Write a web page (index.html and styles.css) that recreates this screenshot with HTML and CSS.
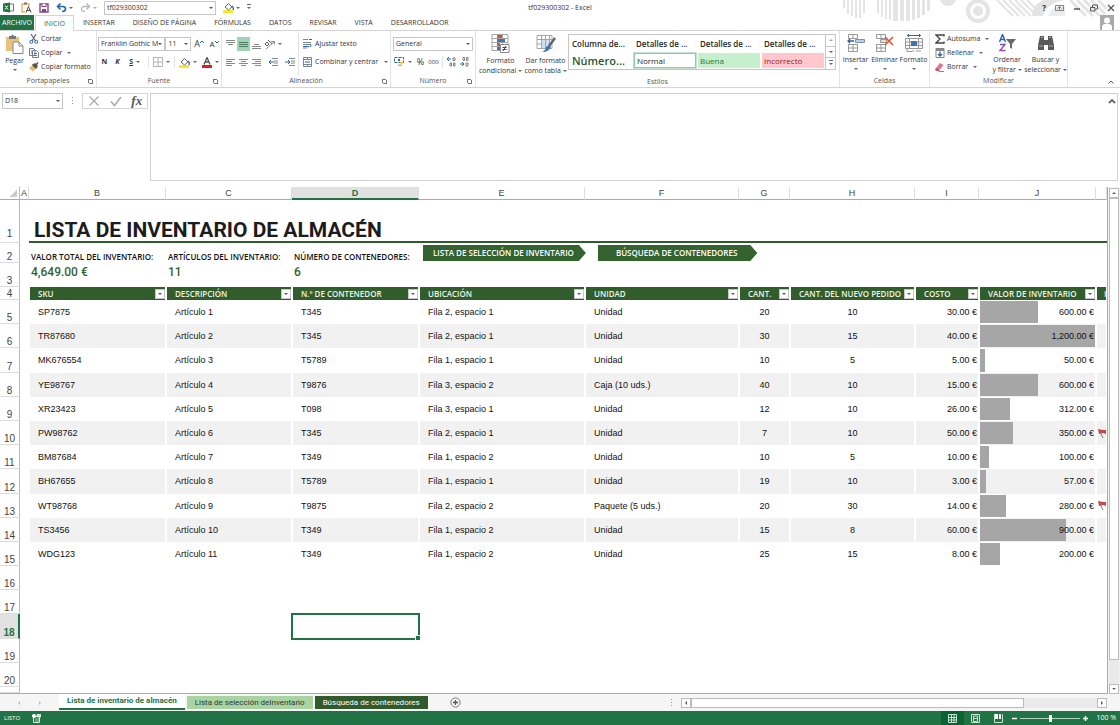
FILE: index.html
```
<!DOCTYPE html>
<html lang="es">
  <head>
    <meta charset="utf-8">
    <title>tf029300302 - Excel</title>
    <link rel="stylesheet" href="styles.css">
  </head>
  <body>
    <header class="titlebar">
      <svg class="pattern" width="280" height="24" viewBox="0 0 280 24">
        <path d="M4 0V8M8 0V14M12 0V16M16 0V18M20 0V18M24 0V13" stroke="#e4e4e4" stroke-width="2"/>
        <path d="M38 0V13M42 0V17M46 0V19M50 0V20" stroke="#e4e4e4" stroke-width="2"/>
        <path d="M53 0h5v21h-5zM60 0h4v21h-4zM66 0h4v21h-4zM72 0h3v20h-3zM77 0h3v18h-3zM82 0h3v15h-3zM87 0h3v11h-3z" fill="#e4e4e4"/>
        <circle cx="108" cy="-2" r="8" fill="#e4e4e4"/>
        <circle cx="138" cy="11" r="10" fill="none" stroke="#e4e4e4" stroke-width="4"/>
        <circle cx="138" cy="11" r="5" fill="#e4e4e4"/>
        <path d="M157 0l16 16M163 0l16 16M169 0l16 16M175 0l16 16M181 0l16 16M187 0l13 13" stroke="#e4e4e4" stroke-width="2"/>
        <path d="M192 16c0-8 5-13 11-16h22c-12 2-20 8-22 16z" fill="#e4e4e4"/>
        <path d="M208 16c2-6 7-11 17-11v11z" fill="#ededed"/>
        <path d="M230 0l16 16M237 0l16 16M244 0l16 16M251 0l14 14M258 0l9 9" stroke="#e4e4e4" stroke-width="3"/>
      </svg>
      <div class="quick">
        <svg width="11" height="11" viewBox="0 0 11 11"><path d="M6 2h4.500v7H6z" fill="#fff" stroke="#217346" stroke-width=".8"/><path d="M0 1.500L7 .5v10l-7-1z" fill="#217346"/><path d="M2 3.500l3 4M5 3.500l-3 4" stroke="#fff"/></svg>
        <button class="tool" aria-label="Pegar formato"><svg width="11" height="11" viewBox="0 0 11 11"><path d="M1 2h7v8H1z" fill="#fff" stroke="#e8b566" stroke-width="1.500"/><path d="M3 .5h3v2H3z" fill="#777"/><path d="M4 4h7v7H4z" fill="#fff"/><path d="M5 10.500l2.500-6 2.500 6M6 8.500h3" fill="none" stroke="#444"/></svg></button>
        <button class="tool" aria-label="Guardar"><svg width="10" height="10" viewBox="0 0 10 10"><path d="M1 1h8v8H1z" fill="#fff" stroke="#81438f" stroke-width="1.400"/><path d="M2.500 1h5v3h-5zM3 6h4v3H3z" fill="#81438f"/><path d="M3.500 1h3v2h-3z" fill="#fff"/></svg></button>
        <button class="tool wide" aria-label="Deshacer"><svg width="11" height="10" viewBox="0 0 11 10"><path d="M1.500 3.500h5q3 0 3 2.500T6 8.500M4.500.5l-3 3 3 3" fill="none" stroke="#2b63a8" stroke-width="1.600"/></svg><i class="caret"></i></button>
        <button class="tool wide" aria-label="Rehacer"><svg width="11" height="10" viewBox="0 0 11 10"><path d="M9.500 3.500h-5q-3 0-3 2.500T5 8.500M6.500.5l3 3-3 3" fill="none" stroke="#b8b8b8" stroke-width="1.300"/></svg><i class="caret pale"></i></button>
        <span class="combo file"><select aria-label="Documento"><option>tf029300302</option></select></span>
        <button class="tool wide" aria-label="Color de relleno"><svg width="11" height="11" viewBox="0 0 11 11"><path d="M0 8h10v3H0z" fill="#f5ea2e"/><path d="M2 5l3.500-3.500L9 5 5.500 8z" fill="#fff" stroke="#666"/><path d="M9 4q2 2 1 4" fill="none" stroke="#2b63a8" stroke-width="1.300"/></svg><i class="caret"></i></button>
        <button class="tool" aria-label="Personalizar"><i class="caret lined"></i></button>
      </div>
      <div class="window-title">tf029300302 - Excel</div>
      <div class="window-buttons">
        <button aria-label="Ayuda">?</button>
        <button aria-label="Opciones de la cinta"><svg width="9" height="8" viewBox="0 0 9 8"><path d="M.5 1.500h8v5h-8zM2.500 4.500l2-2 2 2M4.500 3v3" fill="none" stroke="#666" stroke-width=".8"/></svg></button>
        <button aria-label="Minimizar"><svg width="8" height="8"><path d="M1 5h6" stroke="#555" stroke-width="1.500"/></svg></button>
        <button aria-label="Restaurar"><svg width="8" height="8"><path d="M.5 3.500h4.500v3.500H.5zM2.500 3V1h5v4H5.500" fill="none" stroke="#555"/></svg></button>
        <button aria-label="Cerrar"><svg width="8" height="8"><path d="M1 1l6 6M7 1L1 7" stroke="#555" stroke-width="1.300"/></svg></button>
      </div>
    </header>

    <nav class="tabs">
      <button class="file-tab">ARCHIVO</button>
      <button class="active">INICIO</button>
      <button>INSERTAR</button>
      <button>DISEÑO DE PÁGINA</button>
      <button>FÓRMULAS</button>
      <button>DATOS</button>
      <button>REVISAR</button>
      <button>VISTA</button>
      <button>DESARROLLADOR</button>
      <svg class="user" width="14" height="15" viewBox="0 0 14 15"><path d="M0 0h14v15H0z" fill="#a9a9a9"/><circle cx="7" cy="5.500" r="3" fill="#fff"/><path d="M2 15V11q1-2 3-2h4q2 0 3 2v4z" fill="#fff"/></svg>
    </nav>

    <div class="ribbon">
      <section class="group clipboard">
        <div class="group-body">
          <button class="big"><svg width="19" height="20" viewBox="0 0 19 20"><path d="M1 3h13v14H1z" fill="#e9c27c"/><path d="M4 5V2h2q1.500-3 3 0h2v3z" fill="#777"/><path d="M8 8h6l4 4v7.500H8z" fill="#fff" stroke="#888"/><path d="M14 8v4h4" fill="none" stroke="#888"/></svg><span>Pegar</span><i class="caret"></i></button>
          <div class="list">
            <button><svg width="10" height="10" viewBox="0 0 10 10"><path d="M2 0l4.500 7M7 0L3 7" stroke="#666" stroke-width="1.200"/><circle cx="2.300" cy="7.800" r="1.500" fill="none" stroke="#2b63a8"/><circle cx="7.300" cy="7.800" r="1.500" fill="none" stroke="#2b63a8"/></svg>Cortar</button>
            <button><svg width="10" height="10" viewBox="0 0 10 10"><path d="M.5.5h4l1.500 2v5H.5zM3.500 2.500h4l2 2v5h-6z" fill="#fff" stroke="#6c7f99"/><path d="M5 5.500h3M5 7.500h3M2 3h1M2 5h1" stroke="#4a7ebb"/></svg>Copiar<i class="caret"></i></button>
            <button><svg width="10" height="10" viewBox="0 0 10 10"><path d="M0 6l4-3 3 3-3 3.500z" fill="#e9b867"/><path d="M4 3l2-1 2 2-1 2zM7 3l2-2.500" fill="#555" stroke="#555" stroke-width="1.500"/></svg>Copiar formato</button>
          </div>
        </div>
        <footer>Portapapeles<button class="launcher" aria-label="Opciones de portapapeles"></button></footer>
      </section>

      <section class="group font">
        <div class="group-body rows">
          <div class="row">
            <span class="combo typeface"><select aria-label="Fuente"><option>Franklin Gothic M</option></select></span>
            <span class="combo size"><select aria-label="Tamaño"><option>11</option></select></span>
            <button class="tool letter grow" aria-label="Aumentar fuente">A<svg width="4" height="8"><path d="M0 3l2-2 2 2" fill="none" stroke="#2b63a8"/></svg></button>
            <button class="tool letter shrink" aria-label="Disminuir fuente">A<svg width="4" height="8"><path d="M0 1l2 2 2-2" fill="none" stroke="#2b63a8"/></svg></button>
          </div>
          <div class="row">
            <button class="tool"><b>N</b></button>
            <button class="tool"><b><em>K</em></b></button>
            <button class="tool wide"><b><u>S</u></b><i class="caret"></i></button>
            <i class="sep"></i>
            <button class="tool wide" aria-label="Bordes"><svg width="10" height="10"><path d="M.5.5h9v9h-9zM5 0v10M0 5h10" fill="none" stroke="#b5b5b5"/></svg><i class="caret"></i></button>
            <i class="sep"></i>
            <button class="tool wide" aria-label="Relleno"><svg width="11" height="11" viewBox="0 0 11 11"><path d="M0 8h10v3H0z" fill="#f5ea2e"/><path d="M2 5l3.500-3.500L9 5 5.500 8z" fill="#fff" stroke="#666"/><path d="M9 4q2 2 1 4" fill="none" stroke="#2b63a8" stroke-width="1.300"/></svg><i class="caret"></i></button>
            <button class="tool wide" aria-label="Color de fuente"><svg width="10" height="11" viewBox="0 0 10 11"><path d="M0 8h10v3H0z" fill="#e11b22"/><path d="M2 7.500l3-7 3 7M3 5h4" fill="none" stroke="#555" stroke-width="1.300"/></svg><i class="caret"></i></button>
          </div>
        </div>
        <footer>Fuente<button class="launcher" aria-label="Opciones de fuente"></button></footer>
      </section>

      <section class="group alignment">
        <div class="group-body">
          <div class="rows part">
            <div class="row">
              <button class="tool" aria-label="Alinear arriba"><svg width="9" height="9"><path d="M0 .5h9M0 2.500h9M2 4.500h5" stroke="#888"/></svg></button>
              <button class="tool on" aria-label="Alinear en medio"><svg width="9" height="9"><path d="M0 2.500h9M0 4.500h9M0 6.500h9" stroke="#4f7d63"/></svg></button>
              <button class="tool" aria-label="Alinear abajo"><svg width="9" height="9"><path d="M2 4.500h5M0 6.500h9M0 8.500h9" stroke="#888"/></svg></button>
              <button class="tool orient" aria-label="Orientación"><svg width="11" height="10" viewBox="0 0 11 10"><path d="M2 10L10 3M7 2.500l3.500 0v3" fill="none" stroke="#888"/><path d="M1 5l2-2 2 2-2 2zM4 1l4 4" fill="none" stroke="#555"/></svg><i class="caret"></i></button>
            </div>
            <div class="row">
              <button class="tool" aria-label="Izquierda"><svg width="9" height="9"><path d="M0 1.500h9M0 3.500h6M0 5.500h9M0 7.500h6" stroke="#888"/></svg></button>
              <button class="tool" aria-label="Centro"><svg width="9" height="9"><path d="M0 1.500h9M2 3.500h5M0 5.500h9M2 7.500h5" stroke="#888"/></svg></button>
              <button class="tool" aria-label="Derecha"><svg width="9" height="9"><path d="M0 1.500h9M3 3.500h6M0 5.500h9M3 7.500h6" stroke="#888"/></svg></button>
              <button class="tool orient" aria-label="Disminuir sangría"><svg width="10" height="9"><path d="M4 .5h6M6 3h4M6 5h4M4 7.500h6" stroke="#888"/><path d="M6 4H1M3 2L1 4l2 2" fill="none" stroke="#2b63a8"/></svg></button>
              <button class="tool" aria-label="Aumentar sangría"><svg width="10" height="9"><path d="M4 .5h6M6 3h4M6 5h4M4 7.500h6" stroke="#888"/><path d="M0 4h5M3 2l2 2-2 2" fill="none" stroke="#2b63a8"/></svg></button>
            </div>
          </div>
          <div class="rows part ruled">
            <div class="row">
              <button class="text-tool"><svg width="9" height="10"><path d="M0 .5h5M0 3.500h8M0 5.500h8M0 9h4" stroke="#7a8797"/><path d="M6 .5h3M0 7.500h6M7 5q2 2 0 3" fill="none" stroke="#2b63a8"/></svg>Ajustar texto</button>
            </div>
            <div class="row">
              <button class="text-tool"><svg width="9" height="10"><path d="M.5.5h8v9h-8zM4.500.5v2M4.500 7.500v2M.5 2.500h8M.5 7.500h8" fill="none" stroke="#7a8797"/><path d="M2 5h5" stroke="#2b63a8"/></svg>Combinar y centrar</button>
              <i class="caret"></i>
            </div>
          </div>
        </div>
        <footer>Alineación<button class="launcher" aria-label="Opciones de alineación"></button></footer>
      </section>

      <section class="group number">
        <div class="group-body rows">
          <div class="row">
            <span class="combo format"><select aria-label="Formato de número"><option>General</option></select></span>
          </div>
          <div class="row">
            <button class="tool wide" aria-label="Moneda"><svg width="11" height="10" viewBox="0 0 11 10"><path d="M.5.5h9v5h-9z" fill="#fff" stroke="#2b63a8" stroke-dasharray="3 1"/><circle cx="5" cy="3" r="1.200" fill="#2b63a8"/><path d="M6 5h4v1.500H6zM4 7.500h4V9H4z" fill="#e9b040"/></svg><i class="caret"></i></button>
            <button class="tool percent">%</button>
            <button class="tool zeros">000</button>
            <i class="sep"></i>
            <button class="tool" aria-label="Aumentar decimales"><svg width="10" height="10" viewBox="0 0 10 10"><path d="M4 2H0M2 0L0 2l2 2" fill="none" stroke="#2b63a8"/><path d="M6 1h2v2.500H6zM3 6h1.500v3H3zM6.500 6H8v3H6.500z" fill="none" stroke="#666" stroke-width=".8"/></svg></button>
            <button class="tool" aria-label="Disminuir decimales"><svg width="10" height="10" viewBox="0 0 10 10"><path d="M0 7h4M2 5l2 2-2 2" fill="none" stroke="#2b63a8"/><path d="M3 .5h1.500v3H3zM6.500.5H8v3H6.500zM6 6h2v3H6z" fill="none" stroke="#666" stroke-width=".8"/></svg></button>
          </div>
        </div>
        <footer>Número<button class="launcher" aria-label="Opciones de número"></button></footer>
      </section>

      <section class="group styles">
        <div class="group-body">
          <button class="big style-button"><svg width="19" height="20" viewBox="0 0 19 20"><path d="M1 .5h16v16H1zM6.500.5v16M11.500.5v16M1 4.500h16M1 8.500h16M1 12.500h16" fill="#fff" stroke="#a5a5a5"/><path d="M6 1h5v3H6zM6 9h3v3H6z" fill="#d9532c"/><path d="M6 5h8v3H6zM6 13h3v3H6z" fill="#3d74b8"/><path d="M9.500 10.500h8.500v8H9.500z" fill="#fff" stroke="#888"/><path d="M11.500 13.500h4M11.500 15.500h4M15 12l-3 5" stroke="#444"/></svg><span>Formato<br>condicional <i class="caret"></i></span></button>
          <button class="big style-button"><svg width="20" height="20" viewBox="0 0 20 20"><path d="M1 1.500h15v13H1zM5.500 1.500v13M9.500 1.500v13M13.500 1.500v13M1 5.500h15M1 10h15" fill="#fff" stroke="#a5a5a5"/><path d="M6 6h3v3.500H6zM10 6h3v3.500h-3zM6 10.500h3V14H6zM10 10.500h3V14h-3z" fill="#cfdff2"/><path d="M19 4l-6 8" stroke="#666" stroke-width="2.500"/><path d="M13 11l2 2q-2 5-9 5 4-2 4-5z" fill="#3d74b8"/></svg><span>Dar formato<br>como tabla <i class="caret"></i></span></button>
          <div class="gallery">
            <button>Columna de...</button>
            <button>Detalles de ...</button>
            <button>Detalles de ...</button>
            <button>Detalles de ...</button>
            <button class="numero">Número...</button>
            <button class="normal">Normal</button>
            <button class="buena">Buena</button>
            <button class="incorrecto">Incorrecto</button>
          </div>
          <div class="gallery-nav">
            <button aria-label="Anterior"><i class="caret up pale"></i></button>
            <button aria-label="Siguiente"><i class="caret"></i></button>
            <button aria-label="Más"><i class="caret lined"></i></button>
          </div>
        </div>
        <footer>Estilos</footer>
      </section>

      <section class="group cells">
        <div class="group-body">
          <button class="big"><svg width="18" height="19" viewBox="0 0 18 19"><path d="M1.500.5h9v4h-9zM6 .5v4M1.500 10.500h9v7h-9zM6 10.500v7M1.500 14h9" fill="#fff" stroke="#999"/><path d="M8.500 5.500h9v3h-9z" fill="#bcd0ea" stroke="#7a93b8"/><path d="M7 7H1M3 5L1 7l2 2" fill="none" stroke="#2b63a8" stroke-width="1.300"/></svg><span>Insertar</span><i class="caret"></i></button>
          <button class="big"><svg width="18" height="19" viewBox="0 0 18 19"><path d="M.5.5h9v4h-9zM5 .5v4M.5 10.500h9v7h-9zM5 10.500v7M.5 14h9" fill="#fff" stroke="#999"/><path d="M4.500 5.500h6v3h-6z" fill="#ddd" stroke="#999"/><path d="M9 3l8 8M17 3l-8 8" stroke="#d9532c" stroke-width="1.600"/></svg><span>Eliminar</span><i class="caret"></i></button>
          <button class="big"><svg width="18" height="19" viewBox="0 0 18 19"><path d="M2 1.500h14M3.500 0v3M14.500 0v3" stroke="#2b63a8"/><path d="M.5 4.500h17v10H.5zM4.500 4.500v10M13.500 4.500v10M.5 8h17M.5 11.500h17M2 14.500v3h5l2-1M11 17h5" fill="none" stroke="#999"/><path d="M6 7h6v5H6z" fill="#3d74b8"/></svg><span>Formato</span><i class="caret"></i></button>
        </div>
        <footer>Celdas</footer>
      </section>

      <section class="group editing">
        <div class="group-body">
          <div class="list">
            <button><svg width="10" height="10" viewBox="0 0 10 10"><path d="M9 2.500V1H1l4 4-4 4h8V7.500" fill="none" stroke="#444" stroke-width="1.400"/></svg>Autosuma<i class="caret"></i></button>
            <button><svg width="10" height="10" viewBox="0 0 10 10"><path d="M1 .5h8v9H1z" fill="#fff" stroke="#888"/><path d="M1 1h8v2H1z" fill="#888"/><path d="M5 3.500v4M3 6l2 2 2-2" fill="none" stroke="#2b63a8" stroke-width="1.300"/></svg>Rellenar<i class="caret"></i></button>
            <button><svg width="10" height="10" viewBox="0 0 10 10"><path d="M1 6l4-5 3.500 2-4 5z" fill="#e8718d"/><path d="M1 6l3.500 2L3.500 9.500 0 8z" fill="#b9405e"/><path d="M4 9.500h5" stroke="#888"/></svg>Borrar<i class="caret"></i></button>
          </div>
          <button class="big"><svg width="19" height="19" viewBox="0 0 19 19"><path d="M1.500 8L4.500.5 7.500 8M2.500 5.500h4" fill="none" stroke="#2b63a8" stroke-width="1.400"/><path d="M2 10.500h5l-5 6h5.500" fill="none" stroke="#8b4bb0" stroke-width="1.400"/><path d="M8 5h10l-4 5v5l-2-1.500V10z" fill="#666"/></svg><span>Ordenar<br>y filtrar <i class="caret"></i></span></button>
          <button class="big find"><svg width="18" height="19" viewBox="0 0 18 19"><path d="M3 2h4v4h4V2h4l2 9v5h-6v-5H7v5H1v-5z" fill="#595959"/><path d="M4 3.500h2M12 3.500h2M2 12h4M12 12h4" stroke="#aaa"/></svg><span>Buscar y<br>seleccionar <i class="caret"></i></span></button>
        </div>
        <footer>Modificar</footer>
      </section>
      <button class="collapse" aria-label="Contraer la cinta"><svg width="6" height="4"><path d="M.5 3.500L3 1l2.500 2.500" fill="none" stroke="#555"/></svg></button>
    </div>

    <div class="formula-bar">
      <span class="combo name-box"><input aria-label="Cuadro de nombres" value="D18"></span>
      <svg class="grip" width="3" height="15"><path d="M1.500 4v1M1.500 7v1M1.500 10v1" stroke="#999"/></svg>
      <div class="formula-buttons">
        <button aria-label="Cancelar"><svg width="12" height="12"><path d="M1.500 1.500l9 9M10.500 1.500l-9 9" stroke="#aaa" stroke-width="1.300"/></svg></button>
        <button aria-label="Introducir"><svg width="12" height="12"><path d="M1 6.500l3.500 4L11 2" fill="none" stroke="#aaa" stroke-width="1.600"/></svg></button>
        <button class="fx">fx</button>
      </div>
      <div class="formula">
        <textarea aria-label="Fórmula"></textarea>
        <svg width="8" height="6"><path d="M1 5l3-3 3 3" fill="none" stroke="#666" stroke-width="1.800"/></svg>
      </div>
    </div>

    <main class="workbook">
      <div class="sheet">
        <table>
          <colgroup>
            <col class="w-num"><col class="w-a"><col class="w-b"><col class="w-c"><col class="w-d"><col class="w-e"><col class="w-f"><col class="w-g"><col class="w-h"><col class="w-i"><col class="w-j"><col>
          </colgroup>
          <thead>
            <tr class="letters">
              <th class="corner"></th><th>A</th><th>B</th><th>C</th><th class="selected">D</th><th>E</th><th>F</th><th>G</th><th>H</th><th>I</th><th>J</th><th></th>
            </tr>
          </thead>
          <tbody>
            <tr class="title-row"><th>1</th><td></td><td class="title" colspan="10">LISTA DE INVENTARIO DE ALMACÉN</td></tr>
            <tr class="labels-row">
              <th>2</th><td></td>
              <td>VALOR TOTAL DEL INVENTARIO:</td><td>ARTÍCULOS DEL INVENTARIO:</td><td>NÚMERO DE CONTENEDORES:</td>
              <td colspan="7" class="links">
                <div>
                  <a href="#seleccion">LISTA DE SELECCIÓN DE INVENTARIO</a>
                  <a href="#busqueda">BÚSQUEDA DE CONTENEDORES</a>
                </div>
              </td>
            </tr>
            <tr class="totals-row"><th>3</th><td></td><td>4,649.00 €</td><td>11</td><td>6</td><td colspan="7"></td></tr>
            <tr class="head-row">
              <th>4</th><td></td>
              <td><div>SKU<button aria-label="Filtrar"></button></div></td>
              <td><div>DESCRIPCIÓN<button aria-label="Filtrar"></button></div></td>
              <td><div>N.º DE CONTENEDOR<button aria-label="Filtrar"></button></div></td>
              <td><div>UBICACIÓN<button aria-label="Filtrar"></button></div></td>
              <td><div>UNIDAD<button aria-label="Filtrar"></button></div></td>
              <td><div>CANT.<button aria-label="Filtrar"></button></div></td>
              <td><div>CANT. DEL NUEVO PEDIDO<button aria-label="Filtrar"></button></div></td>
              <td><div>COSTO<button aria-label="Filtrar"></button></div></td>
              <td><div>VALOR DE INVENTARIO<button aria-label="Filtrar"></button></div></td>
              <td class="last"><div>I</div></td>
            </tr>
            <tr class="item"><th>5</th><td></td><td>SP7875</td><td>Artículo 1</td><td>T345</td><td>Fila 2, espacio 1</td><td>Unidad</td><td class="count">20</td><td class="count">10</td><td class="money">30.00 €</td><td class="money value"><span class="bar" style="width: 50%"></span>600.00 €</td><td></td></tr>
            <tr class="item"><th>6</th><td></td><td>TR87680</td><td>Artículo 2</td><td>T345</td><td>Fila 2, espacio 1</td><td>Unidad</td><td class="count">30</td><td class="count">15</td><td class="money">40.00 €</td><td class="money value"><span class="bar" style="width: 100%"></span>1,200.00 €</td><td></td></tr>
            <tr class="item"><th>7</th><td></td><td>MK676554</td><td>Artículo 3</td><td>T5789</td><td>Fila 1, espacio 1</td><td>Unidad</td><td class="count">10</td><td class="count">5</td><td class="money">5.00 €</td><td class="money value"><span class="bar" style="width: 4%"></span>50.00 €</td><td></td></tr>
            <tr class="item"><th>8</th><td></td><td>YE98767</td><td>Artículo 4</td><td>T9876</td><td>Fila 3, espacio 2</td><td>Caja (10 uds.)</td><td class="count">40</td><td class="count">10</td><td class="money">15.00 €</td><td class="money value"><span class="bar" style="width: 50%"></span>600.00 €</td><td></td></tr>
            <tr class="item"><th>9</th><td></td><td>XR23423</td><td>Artículo 5</td><td>T098</td><td>Fila 3, espacio 1</td><td>Unidad</td><td class="count">12</td><td class="count">10</td><td class="money">26.00 €</td><td class="money value"><span class="bar" style="width: 26%"></span>312.00 €</td><td></td></tr>
            <tr class="item"><th>10</th><td></td><td>PW98762</td><td>Artículo 6</td><td>T345</td><td>Fila 2, espacio 1</td><td>Unidad</td><td class="count">7</td><td class="count">10</td><td class="money">50.00 €</td><td class="money value"><span class="bar" style="width: 29%"></span>350.00 €</td><td class="flag"><svg width="8" height="9" viewBox="0 0 8 9"><path d="M0 0l5 1 3 0v4l-3-1-4 1z" fill="#d04545"/><path d="M1 1l4 8" stroke="#777"/></svg></td></tr>
            <tr class="item"><th>11</th><td></td><td>BM87684</td><td>Artículo 7</td><td>T349</td><td>Fila 1, espacio 2</td><td>Unidad</td><td class="count">10</td><td class="count">5</td><td class="money">10.00 €</td><td class="money value"><span class="bar" style="width: 8%"></span>100.00 €</td><td></td></tr>
            <tr class="item"><th>12</th><td></td><td>BH67655</td><td>Artículo 8</td><td>T5789</td><td>Fila 1, espacio 1</td><td>Unidad</td><td class="count">19</td><td class="count">10</td><td class="money">3.00 €</td><td class="money value"><span class="bar" style="width: 5%"></span>57.00 €</td><td></td></tr>
            <tr class="item"><th>13</th><td></td><td>WT98768</td><td>Artículo 9</td><td>T9875</td><td>Fila 2, espacio 2</td><td>Paquete (5 uds.)</td><td class="count">20</td><td class="count">30</td><td class="money">14.00 €</td><td class="money value"><span class="bar" style="width: 23%"></span>280.00 €</td><td class="flag"><svg width="8" height="9" viewBox="0 0 8 9"><path d="M0 0l5 1 3 0v4l-3-1-4 1z" fill="#d04545"/><path d="M1 1l4 8" stroke="#777"/></svg></td></tr>
            <tr class="item"><th>14</th><td></td><td>TS3456</td><td>Artículo 10</td><td>T349</td><td>Fila 1, espacio 2</td><td>Unidad</td><td class="count">15</td><td class="count">8</td><td class="money">60.00 €</td><td class="money value"><span class="bar" style="width: 75%"></span>900.00 €</td><td></td></tr>
            <tr class="item"><th>15</th><td></td><td>WDG123</td><td>Artículo 11</td><td>T349</td><td>Fila 1, espacio 2</td><td>Unidad</td><td class="count">25</td><td class="count">15</td><td class="money">8.00 €</td><td class="money value"><span class="bar" style="width: 17%"></span>200.00 €</td><td></td></tr>
            <tr><th>16</th><td colspan="11"></td></tr>
            <tr><th>17</th><td colspan="11"></td></tr>
            <tr><th class="selected">18</th><td colspan="3"></td><td class="cursor"></td><td colspan="7"></td></tr>
            <tr><th>19</th><td colspan="11"></td></tr>
            <tr><th>20</th><td colspan="11"></td></tr>
            <tr class="cut"><th></th><td colspan="11"></td></tr>
          </tbody>
        </table>
      </div>
      <div class="scroll-y">
        <button aria-label="Arriba"><i class="caret up"></i></button>
        <div class="track"><div class="thumb"></div></div>
        <button aria-label="Abajo"><i class="caret"></i></button>
      </div>
    </main>

    <div class="sheet-tabs">
      <div class="arrows"><button aria-label="Hoja anterior"><i class="caret left pale"></i></button><button aria-label="Hoja siguiente"><i class="caret right pale"></i></button></div>
      <button class="current">Lista de inventario de almacén</button>
      <button class="light">Lista de selección deInventario</button>
      <button class="dark">Búsqueda de contenedores</button>
      <button class="add" aria-label="Hoja nueva"><svg width="11" height="11" viewBox="0 0 11 11"><circle cx="5.500" cy="5.500" r="4.600" fill="none" stroke="#777"/><path d="M5.500 3v5M3 5.500h5" stroke="#555" stroke-width="1.300"/></svg></button>
      <svg class="grip" width="3" height="9"><path d="M1.500 1v1M1.500 4v1M1.500 7v1" stroke="#999"/></svg>
      <div class="scroll-x">
        <button aria-label="Izquierda"><i class="caret left"></i></button>
        <div class="track"><div class="thumb"></div></div>
        <button aria-label="Derecha"><i class="caret right"></i></button>
      </div>
    </div>

    <footer class="status">
      <span>LISTO</span>
      <svg class="macro" width="9" height="9" viewBox="0 0 9 9"><path d="M1.500 2.500h6v6h-6z" fill="none" stroke="#d5e8dc"/><circle cx="2" cy="2" r="2" fill="#fff"/><path d="M5 0h4v3H5zM3 5h4M3 7h4" fill="#d5e8dc" stroke="#d5e8dc" stroke-width=".8"/></svg>
      <div class="views">
        <button class="on" aria-label="Normal"><svg width="9" height="9"><path d="M.5.5h8v8h-8zM3.500 0v9M6 0v9M0 3.500h9M0 6h9" fill="none" stroke="#c9e2d2"/></svg></button>
        <button aria-label="Diseño de página"><svg width="9" height="9"><path d="M.5.5h8v8h-8zM2.500 2v5.500h4V2zM3 4.500h3" fill="none" stroke="#c9e2d2"/></svg></button>
        <button aria-label="Saltos de página"><svg width="9" height="9"><path d="M.5 0v8.500h8V0" fill="none" stroke="#c9e2d2"/><path d="M1 0h3v5H1zM5 0h2v5H5z" fill="#fff"/></svg></button>
      </div>
      <div class="zoom">
        <button aria-label="Alejar"><svg width="5" height="5"><path d="M0 2.500h5" stroke="#fff" stroke-width="1.500"/></svg></button>
        <input type="range" min="0" max="100" value="50" aria-label="Zoom">
        <button aria-label="Acercar"><svg width="5" height="5"><path d="M0 2.500h5M2.500 0v5" stroke="#fff" stroke-width="1.500"/></svg></button>
      </div>
      <span class="level">100 %</span>
    </footer>
  </body>
</html>
```
FILE: styles.css
```
* {
  box-sizing: border-box;
}
body {
  margin: 0;
  height: 100vh;
  display: flex;
  flex-direction: column;
  overflow: hidden;
  background: #fff;
  color: #333;
  font-family: "Open Sans", "Noto Sans", sans-serif;
  font-size: 7px;
  line-height: 10px;
}
button, select, input, textarea {
  margin: 0;
  padding: 0;
  border: 0;
  background: none;
  color: inherit;
  font: inherit;
}
button {
  white-space: nowrap;
}
svg {
  display: block;
  flex: none;
}

/* small drop-down arrow */
.caret {
  display: inline-block;
  flex: none;
  width: 0;
  height: 0;
  border: 2px solid transparent;
  border-top-color: #666;
  border-bottom-width: 0;
  vertical-align: middle;
}
.caret.pale {
  border-top-color: #aaa;
}
.caret.up {
  border-top-width: 0;
  border-bottom: 2px solid #666;
}
.caret.up.pale {
  border-bottom-color: #aaa;
}
.caret.left, .caret.right {
  border: 2px solid transparent;
}
.caret.left {
  border-left-width: 0;
  border-right-color: #555;
}
.caret.right {
  border-right-width: 0;
  border-left-color: #555;
}
.caret.left.pale {
  border-right-color: #bbb;
}
.caret.right.pale {
  border-left-color: #bbb;
}
.caret.lined {
  position: relative;
}
.caret.lined::before {
  content: "";
  position: absolute;
  top: -5px;
  left: -2px;
  width: 4px;
  height: 1px;
  background: #666;
}

.combo {
  position: relative;
  display: flex;
  height: 14px;
  border: 1px solid #c6c6c6;
  background: #fff;
}
.combo select, .combo input {
  appearance: none;
  width: 100%;
  padding-left: 2px;
  outline: none;
}
.combo::after {
  content: "";
  position: absolute;
  top: 5px;
  right: 2px;
  border: 2px solid transparent;
  border-top-color: #555;
  border-bottom-width: 0;
}

/* title bar */
.titlebar {
  position: relative;
  display: grid;
  grid-template-columns: 1fr auto 1fr;
  align-items: center;
  height: 15px;
  flex: none;
}
.pattern {
  position: absolute;
  top: 0;
  right: 0;
}
.quick {
  display: flex;
  align-items: center;
  gap: 7px;
  padding-left: 3px;
}
.file {
  width: 112px;
}
.tool {
  display: flex;
  align-items: center;
  justify-content: center;
  gap: 3px;
}
.quick .wide {
  gap: 2px;
}
.window-buttons {
  position: relative;
  display: flex;
  justify-content: flex-end;
  align-items: center;
  gap: 9px;
  padding-right: 5px;
}
.window-buttons button {
  font-weight: bold;
  font-size: 8px;
}

/* ribbon tabs */
.tabs {
  position: relative;
  display: flex;
  height: 16px;
  flex: none;
  border-bottom: 1px solid #d5d5d5;
}
.tabs button {
  padding: 0 8px;
  border: 1px solid transparent;
  border-bottom: 0;
}
.tabs .file-tab {
  padding: 0 1px;
  margin-right: 1px;
  background: #217346;
  color: #fff;
}
.tabs .active {
  margin-bottom: -1px;
  border-color: #d5d5d5;
  background: #fff;
  color: #217346;
}
.user {
  margin: 0 6px 0 auto;
}

/* ribbon */
.ribbon {
  display: flex;
  height: 57px;
  flex: none;
  border-bottom: 1px solid #d5d5d5;
}
.group {
  display: flex;
  flex-direction: column;
  flex: none;
  border-right: 1px solid #e3e3e3;
}
.group-body {
  display: flex;
  flex: 1;
}
.group footer {
  display: flex;
  justify-content: center;
  position: relative;
  height: 12px;
  padding-top: 1px;
  color: #555;
}
.launcher {
  position: absolute;
  right: 4px;
  top: 4px;
  width: 4px;
  height: 4px;
  border-top: 1px solid #777;
  border-left: 1px solid #777;
}
.launcher::after {
  content: "";
  display: block;
  width: 3px;
  height: 3px;
  border-right: 1px solid #777;
  border-bottom: 1px solid #777;
}
.clipboard {
  width: 97px;
}
.font {
  width: 125px;
}
.alignment {
  width: 169px;
}
.number {
  width: 85px;
}
.styles {
  width: 364px;
}
.cells {
  width: 90px;
}
.editing {
  width: 138px;
}
.big {
  display: flex;
  flex-direction: column;
  align-items: center;
  width: 29px;
  padding-top: 3px;
}
.big > .caret {
  margin-top: 3px;
}
.big span {
  margin-top: 2px;
}
.list {
  display: flex;
  flex-direction: column;
  padding-top: 1px;
}
.list button {
  display: flex;
  align-items: center;
  gap: 2px;
  height: 14px;
}
.list .caret {
  margin-left: 3px;
}
.rows {
  display: flex;
  flex-direction: column;
  padding-top: 4px;
}
.row {
  display: flex;
  align-items: center;
  height: 18px;
  padding-left: 1px;
}
.row .tool {
  width: 13px;
  height: 14px;
}
.row .tool.wide {
  width: 22px;
}
.row .on {
  background: #9fd5b7;
}
.row .letter {
  width: 14px;
  margin-left: 1px;
  font-size: 9px;
  gap: 0;
}
.row .shrink {
  font-size: 8px;
}
.sep {
  width: 1px;
  height: 12px;
  margin: 0 2px;
  background: #e1e1e1;
}
.typeface {
  width: 68px;
}
.size {
  width: 26px;
}
.part {
  padding-left: 1px;
}
.row .orient {
  width: 20px;
}
.ruled {
  margin-left: 2px;
  border-left: 1px solid #e3e3e3;
}
.part + .part .row {
  padding-left: 3px;
  gap: 6px;
}
.text-tool {
  display: flex;
  align-items: center;
  gap: 3px;
}
.format {
  width: 80px;
  margin-left: 1px;
}
.percent {
  font-size: 9px;
}
.zeros {
  font-size: 6px;
}
.styles .group-body {
  padding-left: 2px;
}
.styles .style-button {
  width: 45px;
}
.gallery {
  display: grid;
  grid-template-columns: repeat(4, 1fr);
  grid-template-rows: 17px 17px;
  width: 258px;
  height: 36px;
  margin: 3px 0 0 0;
  border: 1px solid #c6c6c6;
  color: #262626;
  font-size: 8px;
}
.gallery button {
  margin: 1px;
  padding-left: 2px;
  text-align: left;
}
.gallery button:nth-child(-n+4) {
  font-weight: 600;
}
.gallery .numero {
  color: #24592a;
  font-size: 11px;
  font-weight: 600;
}
.gallery .normal {
  border: 1px solid #8cc9a8;
  outline: 1px solid #c3e2d1;
}
.gallery .buena {
  background: #c6efce;
  color: #1a7a2a;
}
.gallery .incorrecto {
  background: #ffc7ce;
  color: #9c1a20;
}
.gallery-nav {
  display: flex;
  flex-direction: column;
  width: 10px;
  height: 36px;
  margin-top: 3px;
}
.gallery-nav button {
  display: flex;
  flex: 1;
  align-items: center;
  justify-content: center;
  border: 1px solid #c6c6c6;
  border-left: 0;
}
.gallery-nav button + button {
  border-top: 0;
}
.cells .group-body {
  padding-left: 1px;
}
.editing .list {
  width: 59px;
  padding-left: 5px;
}
.editing .big {
  width: 36px;
}
.editing .find {
  width: 41px;
}
.collapse {
  align-self: flex-end;
  margin: 0 6px 3px auto;
}

/* formula bar */
.formula-bar {
  display: flex;
  align-items: flex-start;
  flex: none;
  height: 99px;
  padding: 5px 2px 6px 2px;
}
.name-box {
  width: 61px;
  height: 16px;
}
.name-box::after {
  top: 6px;
}
.formula-bar .grip {
  margin: 0 8px;
}
.formula-buttons {
  display: flex;
  align-items: center;
  justify-content: space-around;
  width: 66px;
  height: 16px;
  border: 1px solid #d5d5d5;
}
.fx {
  color: #555;
  font: italic bold 13px "Liberation Serif", serif;
}
.formula {
  position: relative;
  flex: 1;
  height: 88px;
  margin-left: 2px;
  border: 1px solid #d0d0d0;
}
.formula textarea {
  display: block;
  width: 100%;
  height: 100%;
  resize: none;
  outline: none;
}
.formula svg {
  position: absolute;
  top: 4px;
  right: 1px;
}

/* grid */
.workbook {
  display: flex;
  flex: 1;
  min-height: 0;
}
.sheet {
  flex: 1;
  overflow: hidden;
  border-right: 1px solid #ababab;
  border-bottom: 1px solid #ababab;
}
table {
  width: 100%;
  height: 100%;
  table-layout: fixed;
  border-collapse: separate;
  border-spacing: 0;
  color: #111;
  font-family: "Liberation Sans", Arial, sans-serif;
  font-size: 9px;
  line-height: 10px;
}
.w-num { width: 20px; }
.w-a { width: 9px; }
.w-b { width: 137px; }
.w-c { width: 126px; }
.w-d { width: 127px; }
.w-e { width: 166px; }
.w-f { width: 154px; }
.w-g { width: 51px; }
.w-h { width: 125px; }
.w-i { width: 64px; }
.w-j { width: 117px; }
td, th {
  padding: 0;
  white-space: nowrap;
}
th {
  border-right: 1px solid #bbb;
  border-bottom: 1px solid #ddd;
  color: #444;
  font-size: 10px;
  font-weight: normal;
  vertical-align: bottom;
}
th.selected {
  border-right: 2px solid #217346;
  background: #e1e1e1;
  color: #217346;
  font-weight: bold;
}
.letters th {
  height: 13px;
  border-right: 1px solid #ddd;
  border-bottom: 1px solid #ababab;
  font-size: 9px;
  vertical-align: middle;
}
.letters th.selected {
  border-bottom: 2px solid #217346;
}
.letters .corner {
  background: linear-gradient(135deg, transparent 50%, #ccc 50%) right 2px bottom 2px / 7px 7px no-repeat;
  border-right-color: #bbb;
}
.title-row {
  height: 43px;
}
.title-row th {
  padding-bottom: 3px;
}
.title {
  padding-left: 5px;
  border-bottom: 2px solid #305c2d;
  color: #1c1c1c;
  font-family: Roboto, sans-serif;
  font-size: 21px;
  font-weight: bold;
  line-height: 22px;
  vertical-align: bottom;
}
.labels-row {
  height: 20px;
}
.labels-row td {
  padding: 0 0 1px 2px;
  font-family: "Open Sans", sans-serif;
  font-size: 8px;
  font-weight: 600;
  vertical-align: bottom;
}
.labels-row .links {
  padding: 0 0 0 4px;
}
.links div {
  display: flex;
  gap: 12px;
  padding-bottom: 2px;
}
.links a {
  padding: 3px 12px 3px 10px;
  background: #35632f;
  clip-path: polygon(0 0, calc(100% - 7px) 0, 100% 50%, calc(100% - 7px) 100%, 0 100%);
  color: #fff;
  text-decoration: none;
}
.links a + a {
  padding: 3px 20px 3px 18px;
}
.totals-row {
  height: 24px;
}
.totals-row td {
  padding: 2px 0 0 2px;
  color: #35632f;
  font-family: Roboto, sans-serif;
  font-size: 12px;
  font-weight: 500;
  line-height: 14px;
  vertical-align: top;
}
.head-row {
  height: 13px;
}
.head-row td:nth-child(n+3) {
  border: 0 solid #fff;
  border-width: 0 1px;
  background: #315d2d;
  color: #eef4e8;
  font-family: "Open Sans", sans-serif;
  font-size: 8px;
  font-weight: 600;
}
.head-row div {
  display: flex;
  align-items: center;
  justify-content: space-between;
  height: 13px;
  padding-left: 8px;
}
.head-row .last div {
  padding-left: 7px;
}
.head-row button {
  display: flex;
  align-items: center;
  justify-content: center;
  width: 10px;
  height: 10px;
  margin-top: 1px;
  border: 1px solid #c6c6c6;
  background: #fff;
}
.head-row button::after {
  content: "";
  border: 2px solid transparent;
  border-top-color: #555;
  border-bottom-width: 0;
}
.item td:nth-child(n+3) {
  padding-left: 8px;
  border: 0 solid #fff;
  border-width: 0 1px;
}
.item:nth-child(even) td:nth-child(n+3) {
  background: #f1f1f1;
}
.item td.count {
  padding: 0;
  text-align: center;
}
.item td.money {
  padding: 0 1px 0 0;
  text-align: right;
}
.value {
  position: relative;
  isolation: isolate;
}
.bar {
  position: absolute;
  z-index: -1;
  top: 1px;
  bottom: 1px;
  left: 0;
  background: #a6a6a6;
}
.item td.flag {
  padding-left: 1px;
}
.cursor {
  position: relative;
}
.cursor::before {
  content: "";
  position: absolute;
  inset: -1px;
  border: 2px solid #217346;
}
.cursor::after {
  content: "";
  position: absolute;
  right: -2px;
  bottom: -2px;
  width: 4px;
  height: 4px;
  border: 1px solid #fff;
  background: #217346;
}
.cut {
  height: 6px;
}

/* scroll bars */
.scroll-y {
  display: flex;
  flex-direction: column;
  width: 12px;
  padding: 1px 1px 0;
  background: #f3f3f3;
}
.scroll-y button, .scroll-x button {
  display: flex;
  align-items: center;
  justify-content: center;
  flex: none;
  width: 10px;
  height: 10px;
  border: 1px solid #bbb;
  background: #fff;
}
.track {
  flex: 1;
  background: #eaeaea;
}
.thumb {
  border: 1px solid #bbb;
  background: #fff;
}
.scroll-y .thumb {
  height: 95%;
}
.scroll-x .thumb {
  width: 82%;
  height: 10px;
}

/* sheet tabs */
.sheet-tabs {
  display: flex;
  align-items: center;
  flex: none;
  height: 17px;
  background: #f5f5f5;
}
.arrows {
  display: flex;
  justify-content: space-evenly;
  width: 59px;
}
.sheet-tabs > button {
  height: 13px;
  padding: 0 8px;
  margin-right: 2px;
  font-family: Roboto, sans-serif;
  font-size: 8px;
}
.sheet-tabs .current {
  height: 16px;
  align-self: flex-start;
  border-bottom: 2px solid #217346;
  background: #fff;
  color: #217346;
  font-weight: bold;
}
.sheet-tabs .light {
  background: #a9d3a3;
  color: #2a3a2a;
}
.sheet-tabs .dark {
  background: #305a2c;
  color: #fff;
}
.sheet-tabs .add {
  margin-left: 12px;
}
.sheet-tabs .grip {
  margin: 0 8px 0 auto;
}
.scroll-x {
  display: flex;
  width: 38%;
  margin-right: 13px;
}

/* status bar */
.status {
  display: flex;
  align-items: center;
  flex: none;
  height: 14px;
  padding: 0 4px;
  gap: 8px;
  background: #217346;
  color: #fff;
  font-size: 6px;
}
.macro {
  margin-left: 4px;
}
.views {
  display: flex;
  margin-left: auto;
}
.views button {
  display: flex;
  align-items: center;
  justify-content: center;
  width: 23px;
  height: 14px;
}
.views .on {
  background: #0a6332;
}
.zoom {
  display: flex;
  align-items: center;
  gap: 3px;
  margin-left: -6px;
}
.zoom input {
  appearance: none;
  width: 60px;
  height: 1px;
  background: #b5d3c1;
}
.zoom input::-webkit-slider-thumb {
  appearance: none;
  width: 3px;
  height: 7px;
  background: #fff;
}
.level {
  font-size: 7px;
}
```
